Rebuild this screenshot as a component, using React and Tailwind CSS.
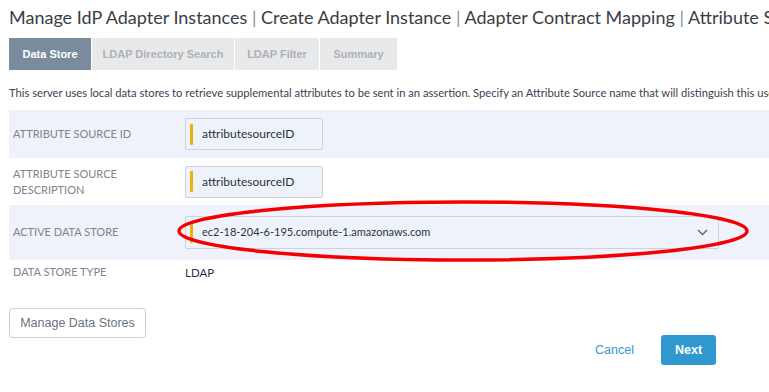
import React from 'react';

const tabs = ['Data Store', 'LDAP Directory Search', 'LDAP Filter', 'Summary'];
const tabWidths = ['w-[82px]', 'w-[142px]', 'w-[84px]', 'w-[77px]'];

function TextField({ value }) {
  return (
    <div className="flex h-[32px] w-[138px] items-center rounded-[2px] border border-[#cfd2d6] bg-[#eef3fb] pl-[4px] normal-case">
      <span className="h-[21px] w-[3px] shrink-0 rounded-[1px] bg-[#eab308]" />
      <span className="ml-[9px] whitespace-nowrap text-[12px] text-[#2c3340]">{value}</span>
    </div>
  );
}

export default function App() {
  return (
    <div className="relative h-[392px] w-[769px] overflow-hidden bg-white font-['Lato',sans-serif]">
      <div className="pl-[9px]">
        <h1 className="h-[36px] whitespace-nowrap pt-[5px] text-[18px] leading-[24px] text-[#3a3d44]">
          Manage IdP Adapter Instances <span className="text-[#8a8d93]">|</span> Create Adapter Instance{' '}
          <span className="text-[#8a8d93]">|</span> Adapter Contract Mapping <span className="text-[#8a8d93]">|</span>{' '}
          Attribute Sources &amp; User Lookup
        </h1>

        <div className="mt-[2px] flex gap-[1px] font-['Liberation_Sans',sans-serif] text-[11px] font-bold">
          {tabs.map((t, i) => (
            <div
              key={t}
              className={`flex h-[32px] items-center justify-center ${tabWidths[i]} ${
                i === 0 ? 'bg-[#7b8b9e] text-white' : 'bg-[#e8e9eb] text-[#aeb1b5]'
              }`}
            >
              {t}
            </div>
          ))}
        </div>

        <p className="mt-[16px] whitespace-nowrap text-[11.2px] leading-[14px] text-[#3b3f4e]">
          This server uses local data stores to retrieve supplemental attributes to be sent in an assertion. Specify an
          Attribute Source name that will distinguish this user lookup from others.
        </p>

        <div className="mt-[10px] text-[11px] uppercase text-[#80848c]">
          <div className="flex h-[48px] items-center bg-[#eff2fb]">
            <div className="w-[176px] pl-[4px]">Attribute Source ID</div>
            <TextField value="attributesourceID" />
          </div>
          <div className="flex h-[47px] items-center">
            <div className="w-[176px] pl-[4px] leading-[16px]">
              Attribute Source
              <br />
              Description
            </div>
            <TextField value="attributesourceID" />
          </div>
          <div className="flex h-[55px] items-center bg-[#eff2fb]">
            <div className="w-[176px] pl-[4px]">Active Data Store</div>
            <div className="flex h-[33px] w-[534px] items-center rounded-[2px] border border-[#cfd2d6] bg-[#eef3fb] pl-[4px] pr-[10px] normal-case">
              <span className="h-[21px] w-[3px] shrink-0 rounded-[1px] bg-[#eab308]" />
              <span className="ml-[9px] flex-1 text-[11px] text-[#2c3340]">ec2-18-204-6-195.compute-1.amazonaws.com</span>
              <svg width="11" height="7" viewBox="0 0 11 7" fill="none" stroke="#5a6270" strokeWidth="1.3">
                <path d="M1 1l4.5 4.5L10 1" />
              </svg>
            </div>
          </div>
          <div className="flex h-[25px] items-center">
            <div className="w-[176px] pl-[4px]">Data Store Type</div>
            <div className="text-[11.5px] text-[#2c3340]">LDAP</div>
          </div>
        </div>

        <button className="mt-[23px] h-[30px] w-[137px] rounded-[3px] border border-[#cdd0d4] bg-white font-['Liberation_Sans',sans-serif] text-[12.5px] text-[#6b7280]">
          Manage Data Stores
        </button>

        <div className="-mt-[3px] flex items-center justify-end gap-[27px] pr-[53px] font-['Liberation_Sans',sans-serif] text-[12.5px]">
          <span className="text-[#3a96d0]">Cancel</span>
          <button className="h-[30px] w-[55px] rounded-[3px] bg-[#2e98cf] font-bold text-white">Next</button>
        </div>
      </div>

      <svg className="pointer-events-none absolute left-0 top-0" width="769" height="392">
        <ellipse cx="463" cy="231" rx="284" ry="29" fill="none" stroke="#f40000" strokeWidth="3.5" />
      </svg>
    </div>
  );
}
